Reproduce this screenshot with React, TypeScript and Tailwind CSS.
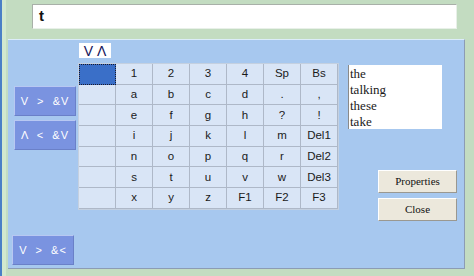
const rows: string[][] = [
  ["", "1", "2", "3", "4", "Sp", "Bs"],
  ["", "a", "b", "c", "d", ".", ","],
  ["", "e", "f", "g", "h", "?", "!"],
  ["", "i", "j", "k", "l", "m", "Del1"],
  ["", "n", "o", "p", "q", "r", "Del2"],
  ["", "s", "t", "u", "v", "w", "Del3"],
  ["", "x", "y", "z", "F1", "F2", "F3"],
];

const words = ["the", "talking", "these", "take"];

function ArrowButton({ label }: { label: string }) {
  return (
    <div className="flex h-[30px] w-[62px] items-center justify-center whitespace-pre border border-t-[#b8c8f2] border-l-[#b8c8f2] border-r-[#6a80c8] border-b-[#6a80c8] bg-[#7a93e0] text-[11px] tracking-[1px] text-white [font-family:'Liberation_Sans',Arial,sans-serif]">
      {label}
    </div>
  );
}

function DialogButton({ label }: { label: string }) {
  return (
    <div className="flex h-[23px] w-[79px] items-center justify-center border border-t-white border-l-white border-r-[#9a9890] border-b-[#9a9890] bg-[#ece8dc] text-[11px] text-[#111] [font-family:'Liberation_Serif','Times_New_Roman',serif]">
      {label}
    </div>
  );
}

export default function App() {
  return (
    <div className="flex h-[276px] w-[474px] overflow-hidden bg-[#c3dcc1]">
      <div className="w-[2px] bg-[#4a7fc6]" />
      <div className="w-[4px] bg-[#d2e8cf]" />
      <div className="flex flex-1 flex-col">
        <div className="ml-[26px] mt-[4px] flex h-[25px] w-[425px] items-center border border-t-[#a8b0a8] border-l-[#a8b0a8] border-r-[#e8f0e8] border-b-[#e8f0e8] bg-white pl-[6px] text-[15px] font-bold text-[#111] [font-family:'Liberation_Sans',Arial,sans-serif]">
          t
        </div>
        <div className="ml-[2px] mt-[10px] flex h-[230px] w-[457px] border-t border-r border-b border-t-[#dcecfa] border-r-[#8c9cb4] border-b-[#8c9cb4] bg-[#a7c8ef]">
          <div className="ml-[6px] flex w-[62px] flex-col pt-[46px]">
            <ArrowButton label="V  >  &V" />
            <div className="mt-[4px]">
              <ArrowButton label="Λ  <  &V" />
            </div>
            <div className="flex-1" />
            <div className="mb-[3px] -ml-[2px]">
              <ArrowButton label="V  >  &<" />
            </div>
          </div>
          <div className="ml-[2px] flex flex-col pt-[3px]">
            <div className="ml-[1px] flex h-[15px] w-[32px] items-center justify-center bg-white text-[14px] leading-none text-[#14145a] [font-family:'Liberation_Sans',Arial,sans-serif]">
              V Λ
            </div>
            <div className="mt-[5px] grid grid-cols-[repeat(7,37px)] grid-rows-[repeat(7,20.7px)] border border-[#c4d0e0] bg-[#d9e5f6] text-[11.5px] text-[#1a1a1a] [font-family:'Liberation_Sans',Arial,sans-serif]">
              {rows.map((row, r) =>
                row.map((cell, c) =>
                  r === 0 && c === 0 ? (
                    <div
                      key={`${r}-${c}`}
                      className="border border-dotted border-[#1a1a2a] bg-[#3a6fc8]"
                    />
                  ) : (
                    <div
                      key={`${r}-${c}`}
                      className="flex items-center justify-center border-r border-b border-[#aeb8c8]"
                    >
                      {cell}
                    </div>
                  )
                )
              )}
            </div>
          </div>
          <div className="ml-[9px] flex flex-col pt-[25px]">
            <div className="flex h-[64px] w-[94px] flex-col border-l border-[#8a8a8a] bg-white pl-[1px] pt-[1px] text-[13px] leading-[16px] text-[#1a1a1a] [font-family:'Liberation_Serif','Times_New_Roman',serif]">
              {words.map((w) => (
                <span key={w}>{w}</span>
              ))}
            </div>
            <div className="ml-[30px] mt-[41px] flex flex-col gap-[5px]">
              <DialogButton label="Properties" />
              <DialogButton label="Close" />
            </div>
          </div>
        </div>
      </div>
    </div>
  );
}
